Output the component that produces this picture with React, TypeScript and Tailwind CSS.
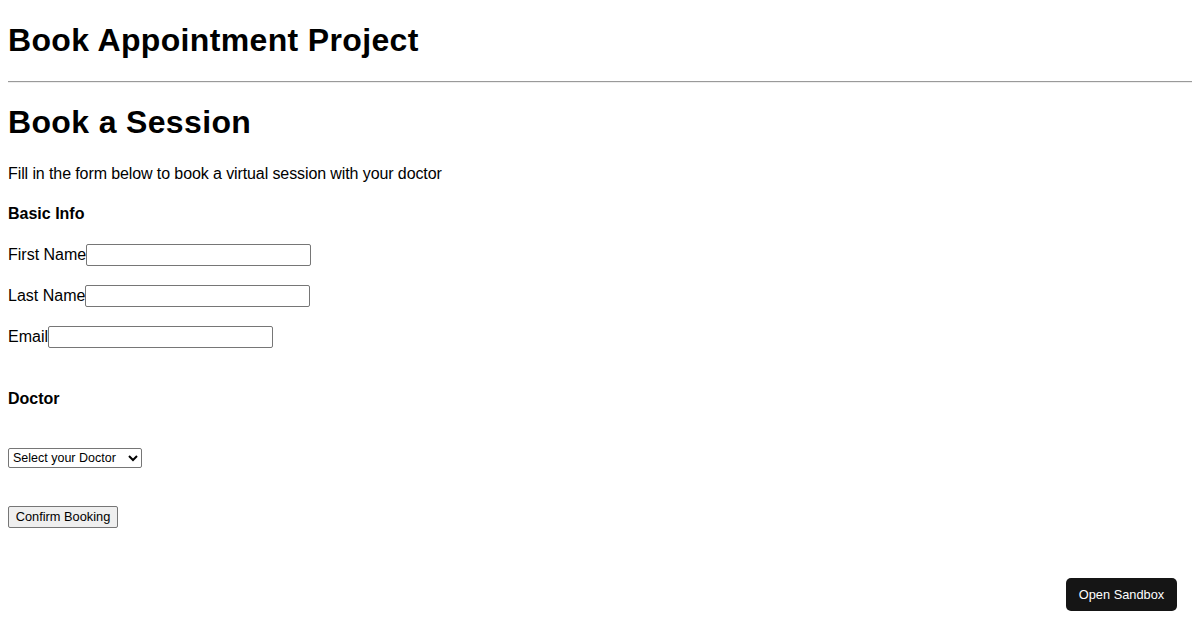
const App = () => {
  return (
    <div className="relative min-h-[630px] bg-white px-2 text-black font-['Liberation_Sans',Arial,sans-serif]">
      <h1 className="pt-[22px] text-[32px] font-bold leading-[37px] tracking-[0.35px]">Book Appointment Project</h1>
      <hr className="mt-[22px] h-0 border-t border-b border-t-[#9a9a9a] border-b-[#eeeeee]" />

      <h1 className="mt-[21px] text-[32px] font-bold leading-[37px] tracking-[0.35px]">Book a Session</h1>
      <p className="mt-[24px] text-base leading-[18px] tracking-[-0.1px]">Fill in the form below to book a virtual session with your doctor</p>

      <form onSubmit={(e) => e.preventDefault()}>
        <h4 className="mt-[22px] text-base font-bold leading-[18px]">Basic Info</h4>

        <label className="mt-[21px] flex h-[22px] items-center text-base">
          First Name
          <input type="text" className="h-[22px] w-[225px] rounded-[2px] border border-[#767676] bg-white px-[2px] text-[13px]" />
        </label>
        <label className="mt-[19px] flex h-[22px] items-center text-base">
          Last Name
          <input type="text" className="h-[22px] w-[225px] rounded-[2px] border border-[#767676] bg-white px-[2px] text-[13px]" />
        </label>
        <label className="mt-[19px] flex h-[22px] items-center text-base">
          Email
          <input type="email" className="h-[22px] w-[225px] rounded-[2px] border border-[#767676] bg-white px-[2px] text-[13px]" />
        </label>

        <h4 className="mt-[42px] text-base font-bold leading-[18px]">Doctor</h4>

        <div className="mt-[40px] flex">
          <select defaultValue="" className="h-[20px] w-[134px] rounded-[2px] border border-[#767676] bg-white text-[12.5px] text-black">
            <option value="" disabled>Select your Doctor</option>
            <option value="smith">Dr. Smith</option>
            <option value="jones">Dr. Jones</option>
          </select>
        </div>

        <div className="mt-[38px] flex">
          <button type="submit" className="h-[22px] w-[110px] rounded-[2px] border border-[#767676] bg-[#efefef] text-[12.8px] leading-none">
            Confirm Booking
          </button>
        </div>
      </form>

      <a href="#" className="fixed bottom-[19px] right-[23px] flex h-[33px] w-[111px] items-center justify-center rounded-[5px] bg-[#151515] text-[12.8px] text-white">
        Open Sandbox
      </a>
    </div>
  )
}

export default App
